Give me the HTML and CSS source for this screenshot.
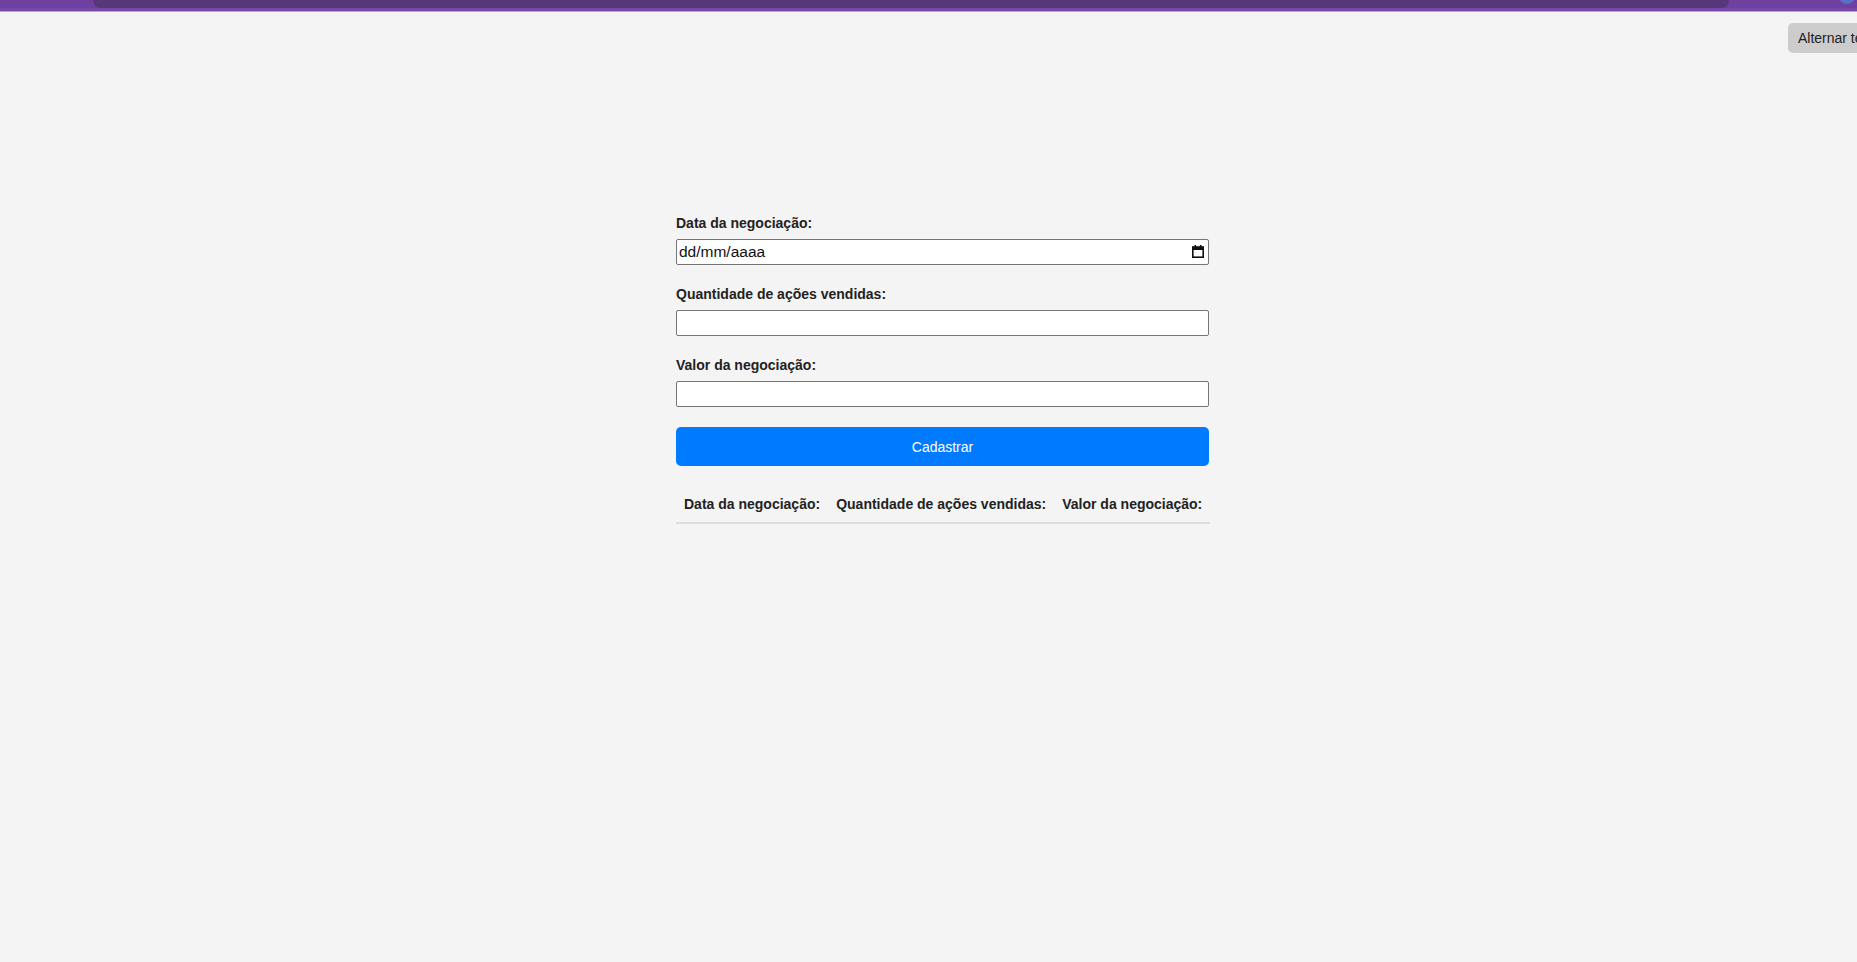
FILE: index.html
```html
<!DOCTYPE html>
<html lang="pt-BR">
<head>
    <meta charset="UTF-8">
    <meta name="viewport" content="width=device-width, initial-scale=1.0">
    <title>Negociações</title>
    <link rel="stylesheet" href="styles.css">
</head>
<body>
    <div class="browser-strip">
        <div class="address-bar"></div>
        <div class="strip-avatar"></div>
    </div>

    <button class="theme-toggle" id="theme-toggle">Alternar tema</button>

    <div class="container">
        <form class="form" id="form">
            <div class="form-group">
                <label for="data">Data da negociação:</label>
                <div class="date-wrap">
                    <input type="text" id="data" placeholder="dd/mm/aaaa" required>
                    <svg class="date-icon" width="12" height="13" viewBox="0 0 12 13">
                        <rect x="2.5" y="0" width="1.6" height="2.5" fill="#111"/>
                        <rect x="7.9" y="0" width="1.6" height="2.5" fill="#111"/>
                        <rect x="0.8" y="2" width="10.4" height="10.2" fill="none" stroke="#111" stroke-width="1.6"/>
                        <rect x="0.8" y="2" width="10.4" height="3" fill="#111"/>
                    </svg>
                </div>
            </div>

            <div class="form-group">
                <label for="quantidade">Quantidade de ações vendidas:</label>
                <input type="number" id="quantidade" min="1" required>
            </div>

            <div class="form-group">
                <label for="valor">Valor da negociação:</label>
                <input type="number" id="valor" min="0.01" step="0.01" required>
            </div>

            <button class="btn-submit" type="submit">Cadastrar</button>
        </form>

        <table class="table">
            <thead>
                <tr>
                    <th>Data da negociação:</th>
                    <th>Quantidade de ações vendidas:</th>
                    <th>Valor da negociação:</th>
                </tr>
            </thead>
            <tbody id="negociacoes">
                <!-- linhas adicionadas pelo script -->
            </tbody>
        </table>
    </div>
</body>
</html>
```

FILE: styles.css
```css
html {
    overflow: hidden;
}
body {
    font-family: "Liberation Sans", Arial, sans-serif;
    background: #f4f4f4;
    color: #222;
    margin: 0;
    padding: 0 0 0 28px;
    min-height: 100vh;
    position: relative;
}
.browser-strip {
    position: absolute;
    top: 0;
    left: 0;
    right: 0;
    height: 12px;
    background: linear-gradient(#6e409f 0, #6e409f 8px, #7748a8 8px, #7748a8 12px);
    border-bottom: 1px solid #b8a3d0;
    box-sizing: border-box;
}
.address-bar {
    position: absolute;
    left: 93px;
    top: 0;
    width: 1636px;
    height: 8px;
    background: #55377a;
    border-radius: 0 0 9px 9px;
}
.strip-avatar {
    position: absolute;
    right: 2px;
    top: -12px;
    width: 16px;
    height: 16px;
    border-radius: 50%;
    background: #5b6fc9;
}
.theme-toggle {
    position: absolute;
    top: 23px;
    right: -35px;
    height: 30px;
    padding: 0 10px;
    background: #ccc;
    color: #222;
    border: none;
    border-radius: 5px;
    font-family: "Liberation Sans", Arial, sans-serif;
    font-size: 14px;
    cursor: pointer;
}
.container {
    width: 533px;
    margin: 0 auto;
    padding-top: 214px;
}
.form-group {
    margin-bottom: 20px;
}
.form-group label {
    display: block;
    font-size: 14px;
    line-height: 17px;
    font-weight: bold;
    padding-top: 1px;
    margin-bottom: 7px;
}
.form-group input {
    display: block;
    width: 100%;
    height: 26px;
    box-sizing: border-box;
    padding: 1px 2px;
    border: 1px solid #767676;
    border-radius: 2px;
    background: #fff;
    font-family: "Liberation Sans", Arial, sans-serif;
    font-size: 15.5px;
    color: #111;
    outline: none;
    -moz-appearance: textfield;
}
.form-group input::-webkit-outer-spin-button,
.form-group input::-webkit-inner-spin-button {
    -webkit-appearance: none;
    margin: 0;
}
.form-group input::placeholder {
    color: #111;
    opacity: 1;
}
.date-wrap {
    position: relative;
}
.date-icon {
    position: absolute;
    right: 5px;
    top: 6px;
}
.btn-submit {
    display: block;
    width: 100%;
    height: 39px;
    background: #007bff;
    color: white;
    border: none;
    border-radius: 5px;
    font-family: "Liberation Sans", Arial, sans-serif;
    font-size: 14px;
    cursor: pointer;
}
.table {
    width: 100%;
    margin-top: 20px;
    border-collapse: collapse;
}
.table th {
    padding: 10px 8px;
    font-size: 14px;
    line-height: 16px;
    font-weight: bold;
    text-align: center;
    white-space: nowrap;
    border-bottom: 2px solid #ddd;
}
```
